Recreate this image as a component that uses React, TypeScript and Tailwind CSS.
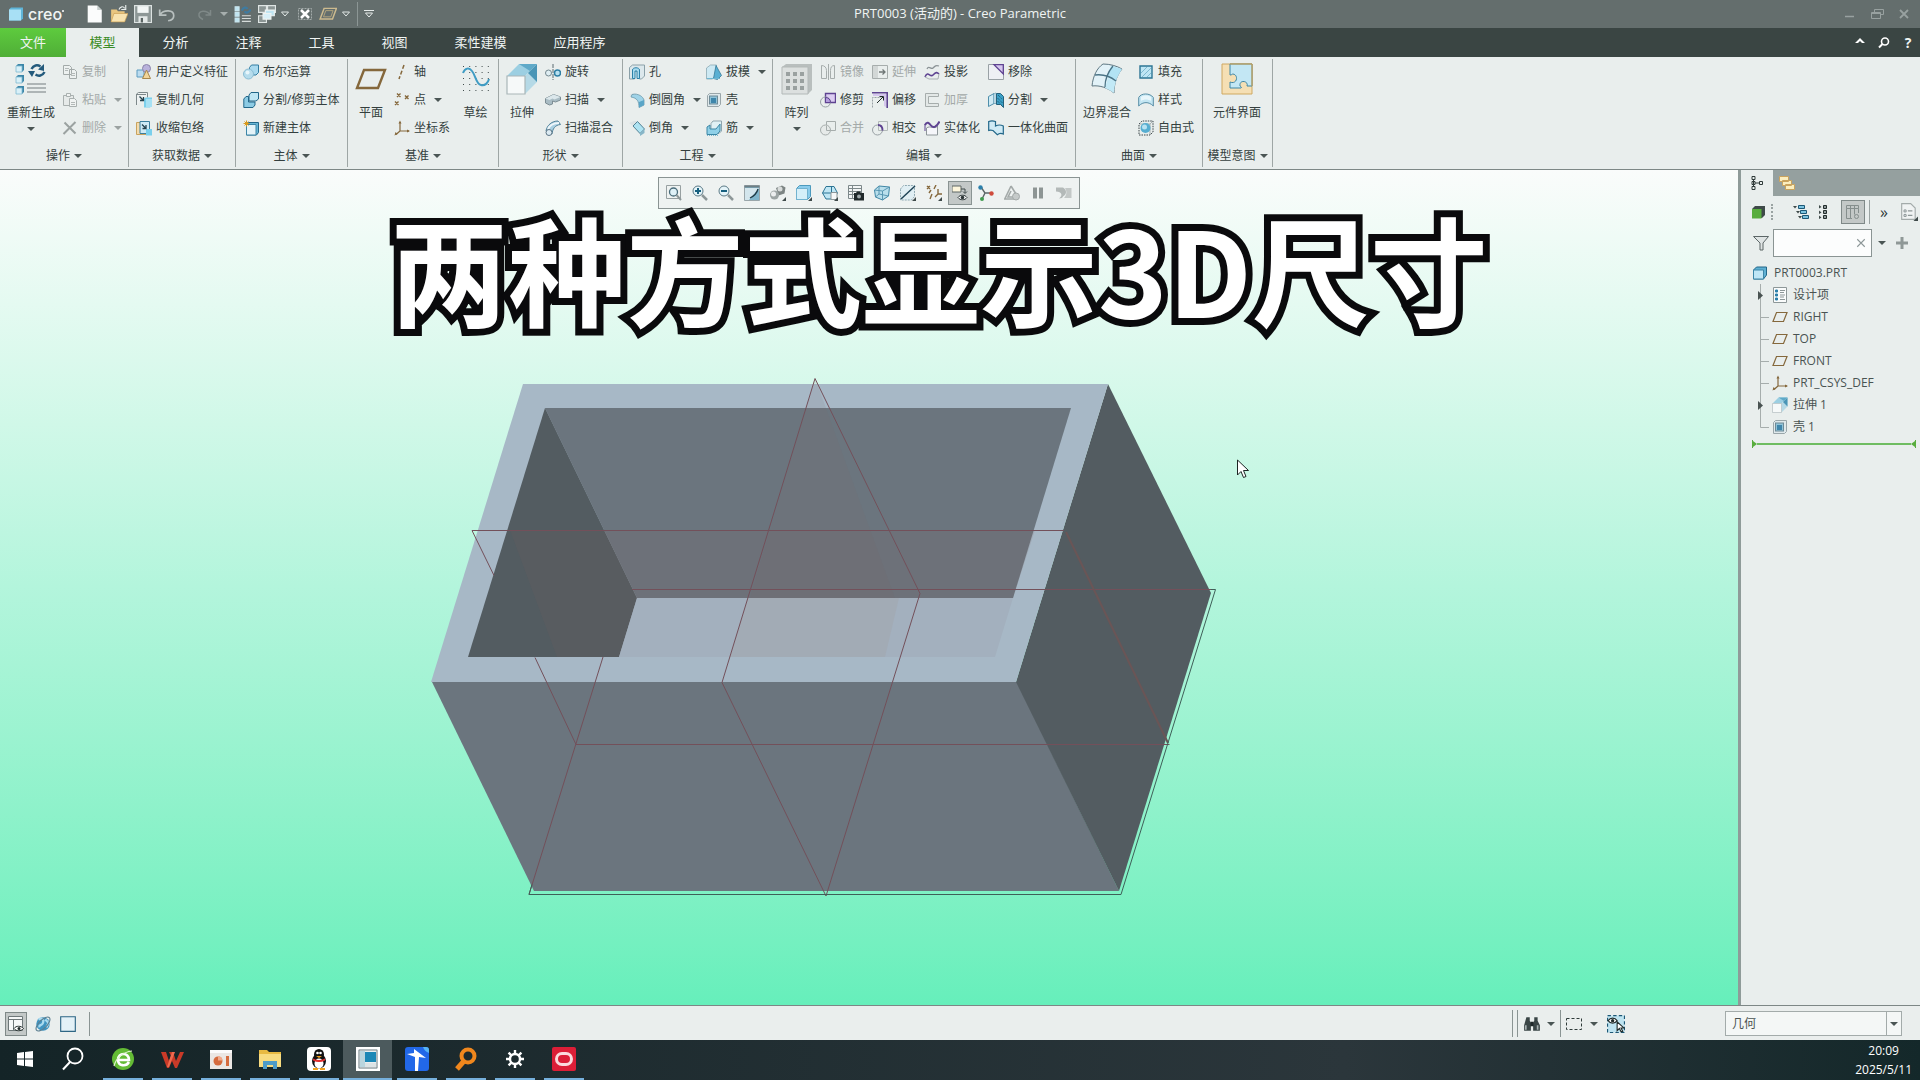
import type { ReactNode } from "react";

const UI_FONT = "font-['Open_Sans','Noto_Sans_CJK_SC',sans-serif]";

/* ---------- shared drawing parts ---------- */

function Ico({
  children,
  className = "size-4",
  box = "0 0 16 16",
}: {
  children: ReactNode;
  className?: string;
  box?: string;
}) {
  return (
    <svg viewBox={box} className={`shrink-0 ${className}`} fill="none" aria-hidden="true">
      {children}
    </svg>
  );
}

function Caret({ className = "text-[#4a5554]" }: { className?: string }) {
  return (
    <svg viewBox="0 0 8 4" className={`h-1 w-2 shrink-0 ${className}`} aria-hidden="true">
      <path d="M0 0h8L4 4z" fill="currentColor" />
    </svg>
  );
}

function CaretOutline() {
  return (
    <svg viewBox="0 0 10 6" className="h-1.5 w-2.5 shrink-0" fill="none" aria-hidden="true">
      <path d="M1.500 1h7L5 5z" stroke="#dfe5e4" />
    </svg>
  );
}

const PlaneIcon = ({ className }: { className?: string }) => (
  <Ico className={className}>
    <path d="M4.500 3.500h10.500l-3.500 9H1z" stroke="#85683c" strokeWidth="1.200" />
  </Ico>
);

const CsysIcon = () => (
  <Ico>
    <path d="M6 2v9h9M6 11l-4 3.500" stroke="#85683c" strokeWidth="1.200" />
    <path d="M4.500 3.500L6 .5l1.500 3zM13 9.500l3 1.500-3 1.500zM.5 15.500l1-3.500 2 2z" fill="#85683c" />
  </Ico>
);

const ShellIcon = () => (
  <Ico>
    <path d="M1.500 3.500l2-2h11v11l-2 2h-11z" fill="#dfe9ec" stroke="#9aa6aa" />
    <rect x="3.500" y="4" width="8" height="8" fill="#8fc3d9" stroke="#6f8a96" />
    <rect x="5" y="6" width="5" height="5" fill="#3f86ab" />
  </Ico>
);

const ExtrudeIcon = ({ className }: { className?: string }) => (
  <Ico className={className}>
    <path d="M.5 6.500L6.500 .5h9L9.500 6.500z" fill="#9ccfe2" />
    <path d="M6.500 .5h9L12 4z" fill="#5ea9c8" />
    <path d="M15.500 .5v9L9.500 15.500v-9z" fill="#b5d9e6" />
    <path d="M15.500 .5v9L11 5z" fill="#4a95b6" />
    <path d="M.5 6.500h9v9h-9z" fill="#f6f9f9" stroke="#aab6b8" strokeWidth=".6" />
  </Ico>
);

/* ---------- ribbon icons ---------- */

const icons = {
  copy: (
    <Ico>
      <path d="M1.500 1.500h6l2 2v7h-8zM7.500 5.500h5l2 2v7h-7z" fill="#edf1f0" stroke="#a3aaa9" />
      <path d="M3 4.500h4M3 6.500h3M9 9.500h4M9 11.500h4" stroke="#b3b9b8" />
    </Ico>
  ),
  paste: (
    <Ico>
      <path d="M1.500 3.500h10v10h-10z" fill="#e6eae9" stroke="#a9b0af" />
      <path d="M4.500 1.500h4v3h-4zM7.500 6.500h5l2 2v6h-7z" fill="#f0f3f2" stroke="#a9b0af" />
      <path d="M9 10.500h4M9 12.500h4" stroke="#b3b9b8" />
    </Ico>
  ),
  remove: (
    <Ico>
      <path d="M2.500 2.500l11 11M13.500 2l-12 12" stroke="#9ba2a1" strokeWidth="2" />
    </Ico>
  ),
  udf: (
    <Ico>
      <path d="M1 6h7v7H1z" fill="#bcdcf0" stroke="#5d9cc0" />
      <circle cx="10.500" cy="4.500" r="4" fill="#b9b2dc" stroke="#8a83ab" />
      <path d="M10.500 6l4 8.500h-8z" fill="#f1d59b" stroke="#a8864b" />
    </Ico>
  ),
  copyGeom: (
    <Ico>
      <path d="M.5 13V2l2-1.500h9v5" fill="#edf1f1" stroke="#7d888a" />
      <path d="M1 2.500h9" stroke="#7d888a" />
      <path d="M8 7l1.500-1.500H16v8L14 15.500H8z" fill="#7bd0ec" />
      <path d="M10 7h6v8h-6z" fill="#a7e1f4" />
      <path d="M3.500 4.500l4 4M7.500 5v3.500H4" stroke="#24424e" strokeWidth="1.300" />
    </Ico>
  ),
  shrink: (
    <Ico>
      <path d="M.5 2.500h10v12H.5z" fill="#f4dcae" stroke="#c9a35e" />
      <path d="M4 1.500h9.500v10l-2 2H4z" fill="#cfeaf5" stroke="#3c7f9d" />
      <path d="M10 9h6v6.500h-6z" fill="#7bd0ec" />
      <path d="M6 4.500l4 4M10 5v3.500H6.500" stroke="#24424e" strokeWidth="1.300" />
    </Ico>
  ),
  boolean: (
    <Ico>
      <path d="M6.500 3.500l2-2.500h7v7.500L13 11H6.500z" fill="#a9d9ee" stroke="#337da1" />
      <circle cx="5.500" cy="10" r="5" fill="#b6dcec" stroke="#8abcd3" />
      <circle cx="4.500" cy="8.500" r="2" fill="#e7f5fa" />
    </Ico>
  ),
  splitBody: (
    <Ico>
      <path d="M6 3l2-2.500h7.500V7L13 9H6z" fill="#bfe6f4" stroke="#226789" />
      <path d="M.8 7L3 4.500h2.500V10H12v3l-2 2.500H.8z" fill="#8ccbe4" stroke="#226789" />
    </Ico>
  ),
  newBody: (
    <Ico>
      <path d="M3.500 4.500l2-2h10v10l-2 2.500h-10z" fill="#69b7d6" stroke="#226789" />
      <path d="M3.500 4.500h9.500V15H3.500z" fill="#e4f3f8" stroke="#3c86a8" />
      <path d="M3.500 .5v6M.5 3.500h6M1.500 1.500l4 4M5.500 1.500l-4 4" stroke="#d99b1f" />
    </Ico>
  ),
  axis: (
    <Ico>
      <path d="M10 1L5 15" stroke="#85683c" strokeWidth="1.500" strokeDasharray="4 2" />
    </Ico>
  ),
  points: (
    <Ico>
      <path
        d="M3 1.500l3.500 3.500M6.500 1.500L3 5M11 3.500l3.500 3.500M14.500 3.500L11 7M1 9.500l3.500 3.500M4.500 9.500L1 13"
        stroke="#85683c"
        strokeWidth="1.400"
      />
    </Ico>
  ),
  csys: <CsysIcon />,
  revolve: (
    <Ico>
      <circle cx="3.500" cy="9" r="3" fill="#dfeef3" stroke="#74888f" />
      <circle cx="12.500" cy="9" r="3" fill="#b8e0f0" stroke="#2f7fa4" strokeWidth="1.500" />
      <path d="M8 0v16" stroke="#5a6b70" strokeDasharray="4 1" />
    </Ico>
  ),
  sweep: (
    <Ico>
      <path d="M.5 6.500l8-4 7 2.500v3l-5 2-3-1v3l-3 1-4-2z" fill="#a9bcc4" stroke="#7d8d94" />
      <path d="M.5 6.500l8-4 7 2.500-6 2.500-2-1-3 1.500z" fill="#dbe7eb" />
    </Ico>
  ),
  sweptBlend: (
    <Ico>
      <path d="M1 11C2 5 7 1 13 1l2.500 3.500C10 5 7.500 9 7 14z" fill="#a8cfe2" stroke="#52829a" />
      <path d="M3 9C5 5 9 3 14 3" stroke="#eef6fa" strokeWidth="2" />
      <circle cx="4" cy="12.500" r="3" fill="#dcebf3" stroke="#5c7484" />
    </Ico>
  ),
  hole: (
    <Ico>
      <path d="M.5 3.500l3-2.500h12v11l-3 3h-2V7H5.500v8h-5z" fill="#dce8ec" stroke="#8aa0a8" />
      <path d="M3.500 14.500V6c0-3 7-3 7 0v8.500h-2.500V7H6v7.500z" fill="#a7dbef" stroke="#2c81a8" />
    </Ico>
  ),
  round: (
    <Ico>
      <path d="M0 3l5-2 3 0-4 4z" fill="#dde3e5" />
      <path d="M3 2.500C10 1 14 5 15 8v5l-5 2.500C10 9 8 6 2 5z" fill="#9fd3e8" stroke="#6a98ab" strokeWidth=".8" />
      <path d="M15 8v5l-5 2.500V10z" fill="#5aa5c7" />
    </Ico>
  ),
  chamfer: (
    <Ico>
      <path d="M0 3l5-2 4 0-5 5z" fill="#dde3e5" />
      <path d="M4 6l4.500-4.500L15.500 9 11 13.500z" fill="#aee3f2" stroke="#528296" />
      <path d="M11 13.500L15.500 9v4L11 16z" fill="#87b6c8" />
    </Ico>
  ),
  draft: (
    <Ico>
      <path d="M.5 4l4-3h6v9l-4 5h-6z" fill="#cde9f3" stroke="#8ca9b4" strokeWidth=".8" />
      <path d="M10 1.500l5.500 10-4 4-4-1z" fill="#59b0d3" stroke="#357a98" strokeWidth=".8" />
      <path d="M1 14.500h13" stroke="#6fb6d1" />
    </Ico>
  ),
  shell: <ShellIcon />,
  rib: (
    <Ico>
      <path d="M5 3.500l2-2.500h8.500v10L13 13.500H5z" fill="#e0f0f4" stroke="#8fa5ad" />
      <path d="M1 7l3-2v4h6l4-5v7l-3 3.500H1z" fill="#8fd0e8" stroke="#3c86a4" />
      <path d="M1 15.500h12" stroke="#7ab7cf" strokeDasharray="1 1" />
    </Ico>
  ),
  mirror: (
    <Ico>
      <path d="M1.500 1.500c3 0 5 2 5 5v8h-5zM14.500 1.500c-3 0-4 2-4 5v8h4zM8.500 0v16" stroke="#a6adac" />
    </Ico>
  ),
  trim: (
    <Ico>
      <path d="M5.500 1.500h10v9h-10z" fill="#dccdf2" stroke="#5e4391" strokeWidth="1.400" />
      <circle cx="5.500" cy="10" r="5" stroke="#99a1a5" />
      <path d="M5.500 5.500v5h5c0-3-2-5-5-5z" fill="#b49ddd" stroke="#5e4391" />
    </Ico>
  ),
  merge: (
    <Ico>
      <path d="M6.500 1.500h9v9h-9z" stroke="#a6adac" />
      <circle cx="5.500" cy="10" r="5" fill="#e6eae9" stroke="#a6adac" />
      <path d="M6.500 6v4.500h4" stroke="#a6adac" />
    </Ico>
  ),
  extend: (
    <Ico>
      <path d="M.5 1.500h15v13H.5z" stroke="#a6adac" />
      <path d="M1 2h5v12H1z" fill="#d2d7d6" />
      <path d="M7 8h6M10.500 5.500L13 8l-2.500 2.500" stroke="#6f7776" strokeWidth="1.300" />
    </Ico>
  ),
  offset: (
    <Ico>
      <path d="M0 .8h15.200V16" stroke="#5e4391" strokeWidth="1.600" />
      <path d="M1 2h13v13l-2-1V4H1z" fill="#d5c6ee" />
      <path d="M.5 15.500v-10h9" stroke="#99a1a5" strokeDasharray="2 1" />
      <path d="M5 11l6-6M7.500 4.500H11.500V8.500" stroke="#222c2b" />
    </Ico>
  ),
  intersect: (
    <Ico>
      <path d="M6.500 1.500h9v9h-9z" stroke="#b3bab9" />
      <circle cx="5.500" cy="10" r="5" stroke="#99a1a5" />
      <path d="M6 5c3 0 4.500 2 4.500 5.500" stroke="#5e4391" strokeWidth="1.800" />
    </Ico>
  ),
  project: (
    <Ico>
      <path d="M3 5c2-4 4 1 6-1s3-3 6-2" stroke="#8b9396" strokeWidth="1.300" />
      <path d="M1 13c3-7 5 1 8-2s4-3 6-1" stroke="#5e4391" strokeWidth="1.600" />
      <path d="M1 13l4 2h9l1-5" stroke="#aab1b3" />
    </Ico>
  ),
  thicken: (
    <Ico>
      <path d="M14.500 1.500h-13v13h13v-3h-10v-7h10z" fill="#e3e8e7" stroke="#a6adac" />
    </Ico>
  ),
  solidify: (
    <Ico>
      <path d="M2.500 8v7h11V6c-3 4-7-1-11 2z" fill="#f5f6fa" stroke="#8e969a" />
      <path d="M1 5C3 1 5 3 7 5.500S12 8 15.500 1.500" stroke="#5e4391" strokeWidth="2" />
      <path d="M1 4v7" stroke="#5e4391" />
    </Ico>
  ),
  removeSurf: (
    <Ico>
      <path d="M.5 .5h15v15H.5z" fill="#eef0f4" stroke="#99a1a5" />
      <path d="M6 .7h9.300V10z" fill="#d5c6ee" stroke="#5e4391" strokeWidth="1.300" />
    </Ico>
  ),
  splitSurf: (
    <Ico>
      <path d="M.5 4.500L6 1.500v10L.5 14.500z" fill="#cfeaf4" stroke="#4f8fab" />
      <path d="M6 2c1-1 2-1 2-1v10.500H6z" fill="#e7f4f8" stroke="#4f8fab" strokeWidth=".6" />
      <path d="M8.500 1.500h4l3 3v11l-3-3h-4z" fill="#3ba0c6" stroke="#24617c" />
      <path d="M10 3l4 4M9.500 6l5 5M9.500 9l4 4" stroke="#17506c" strokeDasharray="1 1" />
    </Ico>
  ),
  unify: (
    <Ico>
      <path
        d="M.7 1.500C3 .5 5 .5 7.500 1.500V6c3-1.500 5-1.500 7.800 0v8c-2-1-4-1-6 .7L5 10.500C3 10 2 10 .7 10.500z"
        fill="#cfeaf5"
        stroke="#226789"
        strokeWidth="1.200"
      />
    </Ico>
  ),
  fill: (
    <Ico>
      <path d="M2 2h12v12H2z" fill="#bfe6f4" stroke="#2d7594" strokeWidth="1.400" />
      <path d="M3 9l6-6M4 13l9-9M9 13l4-4" stroke="#7fb9d0" />
    </Ico>
  ),
  style: (
    <Ico>
      <path d="M.7 5.500C3 .8 12 .8 15.300 5.500V14C11 9.500 5 9.500 .7 14z" fill="#c3e6f3" stroke="#578da5" />
      <path d="M3 5c3-2 7-2 10 0v4C10 7 6 7 3 9z" fill="#e8f6fb" />
    </Ico>
  ),
  freestyle: (
    <Ico>
      <path d="M1 4l3-3h11v11l-3 3H1z" stroke="#3c474a" strokeDasharray="1.500 1" />
      <path d="M1 4h11v11M12 4l3-3" stroke="#7d888a" strokeWidth=".6" />
      <circle cx="7.500" cy="8" r="5" fill="#57aed1" />
      <circle cx="6.500" cy="7" r="2.500" fill="#b9e2f1" />
    </Ico>
  ),
};

/* ---------- ribbon ---------- */

type Item = { icon: ReactNode; label: string; caret?: boolean; off?: boolean };

function SmallItem({ icon, label, caret, off }: Item) {
  return (
    <button
      type="button"
      disabled={off}
      className={`flex h-7 items-center gap-1 whitespace-nowrap ${off ? "text-[#a3a9a8]" : "text-[#343f3e]"}`}
    >
      {icon}
      <span>{label}</span>
      {caret && (
        <span className="pl-1">
          <Caret className={off ? "text-[#9ba2a1]" : "text-[#4a5554]"} />
        </span>
      )}
    </button>
  );
}

function Column({ items, className = "" }: { items: Item[]; className?: string }) {
  return (
    <div className={`flex flex-col items-start ${className}`}>
      {items.map((item) => (
        <SmallItem key={item.label} {...item} />
      ))}
    </div>
  );
}

function BigItem({
  icon,
  label,
  caret,
  className = "",
}: {
  icon: ReactNode;
  label: string;
  caret?: boolean;
  className?: string;
}) {
  return (
    <button type="button" className={`flex flex-col items-center pt-[5px] ${className}`}>
      <span className="flex h-10 items-start justify-center">{icon}</span>
      <span className="h-5 leading-5 whitespace-nowrap">{label}</span>
      {caret && (
        <span className="pt-1">
          <Caret />
        </span>
      )}
    </button>
  );
}

function Group({ title, width, children }: { title: string; width: string; children: ReactNode }) {
  return (
    <section className={`flex shrink-0 ${width}`}>
      <div className="flex min-w-0 flex-1 flex-col">
        <div className="flex h-[84px] justify-start">{children}</div>
        <button type="button" className="flex h-[27px] items-center justify-center gap-1 pt-px whitespace-nowrap">
          {title}
          <Caret />
        </button>
      </div>
      <div className="mt-px mb-0.5 w-px bg-[#9ea6a5]" />
    </section>
  );
}

function Ribbon() {
  return (
    <div className="flex shrink-0 overflow-hidden border-b border-[#7d8786] bg-[#e9eeed] pt-px text-xs text-[#343f3e]">
      <Group title="操作" width="w-[129px]">
        <BigItem
          className="w-[62px]"
          label="重新生成"
          caret
          icon={
            <Ico className="h-8 w-8" box="0 0 32 32">
              {[1, 12, 23].map((y) => (
                <g key={y}>
                  <path d={`M1 ${y + 2}l2-2h6v6l-2 2H1z`} fill="#3c86a8" />
                  <path d={`M1 ${y + 2}h6v6H1z`} fill="#d9f0f8" stroke="#7fb9d0" strokeWidth=".8" />
                </g>
              ))}
              <path d="M16.500 6c2-4 6-4.500 9-2.500M29.500 9c-2 4-6 4.500-9 2.500" stroke="#245a7c" strokeWidth="2.500" />
              <path d="M23 6.500L29 1v7zM13 8h7l-3 6z" fill="#245a7c" />
              <path d="M12 21h19M12 25h19M12 29h19" stroke="#9aa3a4" strokeWidth="1.600" />
            </Ico>
          }
        />
        <Column
          items={[
            { icon: icons.copy, label: "复制", off: true },
            { icon: icons.paste, label: "粘贴", caret: true, off: true },
            { icon: icons.remove, label: "删除", caret: true, off: true },
          ]}
        />
      </Group>
      <Group title="获取数据" width="w-[107px]">
        <Column
          className="pl-[7px]"
          items={[
            { icon: icons.udf, label: "用户定义特征" },
            { icon: icons.copyGeom, label: "复制几何" },
            { icon: icons.shrink, label: "收缩包络" },
          ]}
        />
      </Group>
      <Group title="主体" width="w-[112px]">
        <Column
          className="pl-[7px]"
          items={[
            { icon: icons.boolean, label: "布尔运算" },
            { icon: icons.splitBody, label: "分割/修剪主体" },
            { icon: icons.newBody, label: "新建主体" },
          ]}
        />
      </Group>
      <Group title="基准" width="w-[151px]">
        <BigItem className="w-[46px]" label="平面" icon={<PlaneIcon className="size-8" />} />
        <Column
          items={[
            { icon: icons.axis, label: "轴" },
            { icon: icons.points, label: "点", caret: true },
            { icon: icons.csys, label: "坐标系" },
          ]}
        />
        <BigItem
          className="w-11 pl-[7px]"
          label="草绘"
          icon={
            <Ico className="h-8 w-8" box="0 0 32 32">
              {[3, 9, 15, 21, 27].map((y) => (
                <path key={y} d={`M3 ${y + 0.5}h27`} stroke="#3f4a4a" strokeDasharray="1 5.200" />
              ))}
              <path d="M3 10c2-5 6-6 9-2 4 5 4 13 9 14 4 1 7-2 8-6" stroke="#3f9cc4" strokeWidth="2" />
            </Ico>
          }
        />
      </Group>
      <Group title="形状" width="w-[124px]">
        <BigItem className="w-[46px]" label="拉伸" icon={<ExtrudeIcon className="size-8" />} />
        <Column
          items={[
            { icon: icons.revolve, label: "旋转" },
            { icon: icons.sweep, label: "扫描", caret: true },
            { icon: icons.sweptBlend, label: "扫描混合" },
          ]}
        />
      </Group>
      <Group title="工程" width="w-[150px]">
        <Column
          className="w-[83px] pl-1.5"
          items={[
            { icon: icons.hole, label: "孔" },
            { icon: icons.round, label: "倒圆角", caret: true },
            { icon: icons.chamfer, label: "倒角", caret: true },
          ]}
        />
        <Column
          items={[
            { icon: icons.draft, label: "拔模", caret: true },
            { icon: icons.shell, label: "壳" },
            { icon: icons.rib, label: "筋", caret: true },
          ]}
        />
      </Group>
      <Group title="编辑" width="w-[303px]">
        <BigItem
          className="w-[47px]"
          label="阵列"
          caret
          icon={
            <Ico className="h-8 w-8" box="0 0 32 32">
              <path d="M1 4l4-3h26v26l-4 4H1z" fill="#b9bfbe" />
              <path d="M1 4h26v27H1z" fill="#dce0df" stroke="#b3b9b8" />
              {[11, 18, 25].map((y) => (
                <path key={y} d={`M5 ${y}h4M12 ${y}h4M19 ${y}h4`} stroke="#9aa1a0" strokeWidth="4" />
              ))}
            </Ico>
          }
        />
        <Column
          className="w-[52px]"
          items={[
            { icon: icons.mirror, label: "镜像", off: true },
            { icon: icons.trim, label: "修剪" },
            { icon: icons.merge, label: "合并", off: true },
          ]}
        />
        <Column
          className="w-[52px]"
          items={[
            { icon: icons.extend, label: "延伸", off: true },
            { icon: icons.offset, label: "偏移" },
            { icon: icons.intersect, label: "相交" },
          ]}
        />
        <Column
          className="w-16"
          items={[
            { icon: icons.project, label: "投影" },
            { icon: icons.thicken, label: "加厚", off: true },
            { icon: icons.solidify, label: "实体化" },
          ]}
        />
        <Column
          items={[
            { icon: icons.removeSurf, label: "移除" },
            { icon: icons.splitSurf, label: "分割", caret: true },
            { icon: icons.unify, label: "一体化曲面" },
          ]}
        />
      </Group>
      <Group title="曲面" width="w-[127px]">
        <BigItem
          className="w-[62px]"
          label="边界混合"
          icon={
            <Ico className="h-8 w-8" box="0 0 32 32">
              <path d="M1 23C2 13 6 5 12 1c7 0 14 2 19 5-5 6-8 14-8 24C17 25 9 22 1 23z" fill="#e2f2f8" stroke="#5f7883" />
              <path d="M20 3c6 1 8 2 11 3-3 5-5 8-6 12l-9-4z" fill="#b2e3f4" />
              <path d="M14 25c3 1 6 3 9 5 0-5 1-8 2-12l-8-3z" fill="#c2e9f6" />
              <path d="M4 12c8-1 16 2 21 6M22 3c-5 6-8 13-8 21" stroke="#4b7486" strokeWidth="1.300" />
            </Ico>
          }
        />
        <Column
          items={[
            { icon: icons.fill, label: "填充" },
            { icon: icons.style, label: "样式" },
            { icon: icons.freestyle, label: "自由式" },
          ]}
        />
      </Group>
      <Group title="模型意图" width="w-[70px]">
        <BigItem
          className="w-[68px]"
          label="元件界面"
          icon={
            <Ico className="h-8 w-8" box="0 0 32 32">
              <path d="M1 1h30v30H1z" fill="#f5dfb4" stroke="#cfa861" />
              <path
                d="M9 1h22v22h-5c2-5-8-7-7 0 1 1 2 1 1 2H9v-6c7 3 9-7 3-8-1 0-1 1-3 1z"
                fill="#c3e7f4"
                stroke="#3f86a5"
              />
              <path d="M9 1h22v22" stroke="#d8a24a" />
            </Ico>
          }
        />
      </Group>
    </div>
  );
}

/* ---------- title bar and tabs ---------- */

function TitleBar() {
  return (
    <header className="grid h-7 shrink-0 grid-cols-[1fr_auto_1fr] items-center bg-[#646e6d] text-[13px] text-[#f0f4f3]">
      <div className="flex h-full items-center">
        <div className="flex w-[86px] items-center gap-1 pl-2">
          <Ico>
            <path d="M1 3.500l2-2h12v11l-2 2H1z" fill="#5fb4d8" />
            <path d="M1 3.500h12v11H1z" fill="#a8e0f5" />
          </Ico>
          <span className="font-['Inter',sans-serif] text-base leading-4 font-medium">creo</span>
          <span className="-ml-1 mb-1.5 size-0.5 rounded-full bg-white" />
        </div>
        <div className="flex items-center gap-1.5">
          <button type="button" aria-label="新建">
            <Ico className="size-[18px]">
              <path d="M1.500 .5h8.500l4 4v11H1.500z" fill="#fbfcfc" />
              <path d="M10 .5v4h4z" fill="#c5cccb" />
            </Ico>
          </button>
          <button type="button" aria-label="打开">
            <Ico className="size-[18px]">
              <path d="M1 4h5l1 1.500h6V15H1z" fill="#e9c680" />
              <path d="M3.500 7.500H16L13 15H1z" fill="#f8e3b0" stroke="#c89d50" strokeWidth=".6" />
              <path d="M8 4c1-3 4-3 5-1M14 0v4h-4" stroke="#e9eeed" />
            </Ico>
          </button>
          <button type="button" aria-label="保存">
            <Ico className="size-[18px]">
              <path d="M.5 .5h15v15H.5z" fill="#8d9796" stroke="#dce2e1" />
              <path d="M3 1h10v6H3z" fill="#f2f6f5" />
              <path d="M4 10h8v5.500H4z" fill="#e3e8e7" />
              <path d="M6 11.500h2v4H6z" fill="#5a6463" />
            </Ico>
          </button>
          <button type="button" aria-label="撤消">
            <Ico className="size-[18px]">
              <path d="M1.500 4v5h6M2 8.500C5 4 14 4 14 9.500c0 3-2 4-5 4.500" stroke="#b8c0bf" strokeWidth="1.500" />
            </Ico>
          </button>
        </div>
        <div className="flex items-center pl-5">
          <button type="button" aria-label="重做" className="flex items-center gap-2" disabled>
            <Ico>
              <path d="M14.500 4v5h-5M14 8.500C11 4 2 4 3 9.500c0 2 2 3 4 4" stroke="#7f8988" strokeWidth="1.500" />
            </Ico>
            <Caret className="text-[#a6aead]" />
          </button>
        </div>
        <div className="flex items-center gap-1.5 pl-1.5">
          <button type="button" aria-label="重新生成模型">
            <Ico className="size-[18px]">
              <path d="M1 1.500h3.500v3.500H1zM1 6.500h3.500V10H1zM1 11.500h3.500V15H1z" fill="#bfe4f1" stroke="#c9e5ee" />
              <path d="M7 5c1-3 4-3.500 5-1.500M14.500 4c-1 3-4 3.500-5 1.500" stroke="#3f7ba0" strokeWidth="2" />
              <path d="M7 9.500h8M7 12h8M7 14.500h8" stroke="#d6dcdb" />
            </Ico>
          </button>
          <button type="button" aria-label="窗口" className="flex items-center gap-1">
            <Ico className="size-[18px]">
              <path d="M.5 .5h7v6h-7zM8.500 .5h7v6h-7zM.5 9.500h7v6h-7z" fill="#8b9594" stroke="#dfe5e4" />
              <path d="M6.500 4.500h8v5h-8z" fill="#bfe4f1" stroke="#eef3f2" />
              <path d="M4.500 7.500h7v5h-7z" fill="#d8f0f8" stroke="#eef3f2" />
            </Ico>
            <CaretOutline />
          </button>
        </div>
        <div className="flex items-center gap-1.5 pl-[7px]">
          <button type="button" aria-label="关闭">
            <Ico>
              <path d="M1.500 2.500h13v11h-13z" stroke="#a3abaa" strokeDasharray="2 1" />
              <path d="M4 4l8 8M12 4l-8 8" stroke="#fff" strokeWidth="2.500" />
            </Ico>
          </button>
          <button type="button" aria-label="平面显示" className="flex items-center gap-1">
            <Ico className="size-[18px]">
              <path d="M4.500 3h11l-3.500 9.500H1z" stroke="#cdbb8f" strokeWidth="1.300" />
              <path d="M6 5h6.500l-2 5.500H4z" stroke="#b8a87f" strokeWidth=".8" />
            </Ico>
            <CaretOutline />
          </button>
          <span className="h-6 w-px bg-[#8c9695]" />
          <button type="button" aria-label="自定义快速访问工具栏">
            <svg viewBox="0 0 10 8" className="h-2 w-2.5" fill="none">
              <path d="M0 .5h10" stroke="#e6ebea" />
              <path d="M1.500 3h7L5 7z" stroke="#e6ebea" />
            </svg>
          </button>
        </div>
      </div>
      <h1 className="whitespace-nowrap">PRT0003 (活动的) - Creo Parametric</h1>
      <div className="flex items-center justify-end gap-[11px] pr-2 text-[#98a1a0]">
        <button type="button" aria-label="最小化">
          <Ico>
            <path d="M3 10.500h9" stroke="currentColor" strokeWidth="1.500" />
          </Ico>
        </button>
        <button type="button" aria-label="还原">
          <Ico>
            <path d="M5.500 6V3.500h9v5H12M2.500 6.500h9v6h-9zM2.500 7.500h9" stroke="currentColor" />
          </Ico>
        </button>
        <button type="button" aria-label="关闭窗口">
          <Ico>
            <path d="M4 4l8 8M12 4l-8 8" stroke="currentColor" strokeWidth="1.800" />
          </Ico>
        </button>
      </div>
    </header>
  );
}

const TABS = [
  { label: "分析", width: "w-[73px]" },
  { label: "注释", width: "w-[73px]" },
  { label: "工具", width: "w-[73px]" },
  { label: "视图", width: "w-[73px]" },
  { label: "柔性建模", width: "w-[99px]" },
  { label: "应用程序", width: "w-[99px]" },
];

function TabBar() {
  return (
    <nav className="flex h-[29px] shrink-0 bg-[#3a4543] text-[13px] text-[#f0f4f3]">
      <button type="button" className="w-[66px] bg-linear-to-b from-[#5ecb3e] to-[#4fae37]">
        文件
      </button>
      <button type="button" className="w-[73px] bg-[#e9eeed] text-[#3b8c26]">
        模型
      </button>
      {TABS.map((tab) => (
        <button key={tab.label} type="button" className={tab.width}>
          {tab.label}
        </button>
      ))}
      <div className="ml-auto flex items-center gap-2 pr-1">
        <button type="button" aria-label="最小化功能区">
          <Ico>
            <path d="M3 8l5-5 5 5h-3L8 6 6 8z" fill="#fff" />
          </Ico>
        </button>
        <button type="button" aria-label="搜索">
          <Ico>
            <circle cx="9" cy="6.500" r="3.500" stroke="#fff" strokeWidth="1.600" />
            <path d="M6.500 9L3 12.500" stroke="#fff" strokeWidth="2" />
          </Ico>
        </button>
        <button type="button" className="w-4 text-sm font-bold">
          ?
        </button>
      </div>
    </nav>
  );
}

/* ---------- graphics area ---------- */

const Corner = () => <path d="M16 12v4h-4z" fill="#3f4a4a" />;

const VIEW_TOOLS: { name: string; art: ReactNode; on?: boolean }[] = [
  {
    name: "重新调整",
    art: (
      <>
        <path d="M.5 .5h14v13H.5z" stroke="#97a0a1" />
        <circle cx="7.500" cy="7" r="4" fill="#dff1f7" stroke="#4a6c7a" strokeWidth="1.300" />
        <path d="M10.500 10l4.500 5" stroke="#8d9798" strokeWidth="2" />
      </>
    ),
  },
  {
    name: "放大",
    art: (
      <>
        <circle cx="6" cy="6" r="5" fill="#e4f4f9" stroke="#5c7a86" />
        <path d="M3 6h6M6 3v6" stroke="#17607f" strokeWidth="2" />
        <path d="M10 10l5 5" stroke="#8d9798" strokeWidth="2.500" />
      </>
    ),
  },
  {
    name: "缩小",
    art: (
      <>
        <circle cx="6" cy="6" r="5" fill="#e4f4f9" stroke="#5c7a86" />
        <path d="M3 6h6" stroke="#17607f" strokeWidth="2" />
        <path d="M10 10l5 5" stroke="#8d9798" strokeWidth="2.500" />
      </>
    ),
  },
  {
    name: "重画",
    art: (
      <>
        <path d="M.5 .5h15v15H.5z" fill="#7fb5cb" stroke="#9aa6aa" />
        <path d="M1 3h14L5 15H1z" fill="#d3e6ed" />
        <path d="M14 4c-1 4-4 7-8 9" stroke="#1f3b46" strokeWidth="1.300" />
        <path d="M.5 1.500h15" stroke="#6e7f85" strokeWidth="2" />
      </>
    ),
  },
  {
    name: "着色",
    art: (
      <>
        <path d="M6 3l6-2.500 3.500 2-1 6-6 2z" fill="#7d8584" />
        <circle cx="10" cy="4" r="2.500" fill="#d8dcdb" />
        <circle cx="4.500" cy="10" r="4.500" fill="#9da5a4" />
        <circle cx="3.500" cy="9" r="2.500" fill="#eceeee" />
        <Corner />
      </>
    ),
  },
  {
    name: "显示样式",
    art: (
      <>
        <path d="M.5 3.500l3-3h11v11l-3 3H.5z" fill="#8accec" stroke="#4c9abd" />
        <path d="M.5 3.500h11v11H.5z" fill="#d5eff9" stroke="#71b2cf" />
        <Corner />
      </>
    ),
  },
  {
    name: "已保存方向",
    art: (
      <>
        <path d="M.5 8L4 1.500h8L15.500 8 12 14H4z" fill="#bfe6f4" stroke="#2d7594" />
        <path d="M.5 8h9V1.500M9.500 8L12 14" stroke="#2d7594" />
        <path d="M9 7.500h6v7H9z" fill="#f6f8f8" stroke="#8d9798" />
        <Corner />
      </>
    ),
  },
  {
    name: "视图管理器",
    art: (
      <>
        <path d="M.5 .5h13v13H.5zM.5 3.500h13M.5 6.500h13M.5 9.500h13M4.500 .5v13" fill="#f2f5f5" stroke="#7d888a" />
        <path d="M6 8h2l1-1.500h3L13 8h3v7.500H6z" fill="#20292b" />
        <circle cx="11" cy="11.500" r="2" fill="#9fa9ab" />
      </>
    ),
  },
  {
    name: "透视图",
    art: (
      <>
        <path d="M.5 5L5 1l10.500 1-1 9-6 4-7-3z" fill="#b9dfec" stroke="#3f86a5" />
        <path d="M.5 5l8 1 7-4M8.500 6v9M5 1v8l9.500 2M5 9l-3.500 3" stroke="#5a98b3" />
      </>
    ),
  },
  {
    name: "截面",
    art: (
      <>
        <path d="M.5 4l3-3.500h11v11l-3 3.500H.5z" fill="#e0eff4" stroke="#8fa9b3" strokeDasharray="2 1" />
        <path d="M1 14L15 1" stroke="#1e4356" strokeWidth="1.500" />
        <Corner />
      </>
    ),
  },
  {
    name: "基准显示",
    art: (
      <>
        <path d="M1 1l3 3M4 1L1 4M10 0L8 4M6 9l-2 5M12 4v5h4M12 9l-3 3M3 8l2-3" stroke="#85683c" strokeWidth="1.400" />
        <Corner />
      </>
    ),
  },
  {
    name: "注释显示",
    on: true,
    art: (
      <>
        <path d="M0 1h9v6H0z" fill="#fdf6dc" stroke="#5c6667" />
        <path d="M9 4h4v4M11 6.500l2 2 2-2" stroke="#3f4a4a" />
        <path d="M6 12.500c2-3 7-3 9 0-2 3-7 3-9 0z" fill="#fff" stroke="#2b3536" />
        <circle cx="10.500" cy="12.500" r="1.800" fill="#2b3536" />
      </>
    ),
  },
  {
    name: "旋转中心",
    art: (
      <>
        <path d="M3 2l4 6-3 6M7 8h6" stroke="#5c6667" strokeWidth="1.400" />
        <circle cx="2.500" cy="2.500" r="2.200" fill="#2c80ab" />
        <circle cx="13.500" cy="8.500" r="2.200" fill="#cf4b3c" />
        <circle cx="4" cy="14" r="2" fill="#3f9b4e" />
      </>
    ),
  },
  {
    name: "仿真",
    art: (
      <>
        <path d="M7 1L.8 14h11M7 1l5 8M7 6l-3 6h5" stroke="#a3a9a8" strokeWidth="1.600" />
        <circle cx="12" cy="11.500" r="3.500" fill="#c5cac9" stroke="#a3a9a8" />
      </>
    ),
  },
  {
    name: "暂停",
    art: <path d="M3 2.500h4v11H3zM9 2.500h4v11H9z" fill="#8d9594" />,
  },
  {
    name: "重播",
    art: (
      <>
        <path d="M0 2.500h7c4 2 4 7 0 9 0 1-2 2-4 2 4-3 3-7-3-7z" fill="#b3b9b8" />
        <path d="M9 3h6.500v10H8c3-3 3-7 1-10z" fill="#c3c8c7" />
      </>
    ),
  },
];

function ViewToolbar() {
  return (
    <div className="flex h-8 border border-[#8a9493] bg-[#eef2f1] px-0.5">
      {VIEW_TOOLS.map((tool) => (
        <button
          key={tool.name}
          type="button"
          aria-label={tool.name}
          className="flex w-[26px] items-center justify-center"
        >
          <span
            className={`flex size-6 items-center justify-center border ${
              tool.on ? "border-[#8a9493] bg-[#c3c8c7]" : "border-transparent"
            }`}
          >
            <Ico>{tool.art}</Ico>
          </span>
        </button>
      ))}
    </div>
  );
}

function Model() {
  return (
    <svg viewBox="0 170 1738 835" className="absolute inset-0 h-full w-full" fill="none" aria-hidden="true">
      {/* solid faces */}
      <path d="M432 682h585l102 209H534z" fill="#6b757e" />
      <path d="M1108 384l103 209-92 298-103-209z" fill="#535c61" />
      <path d="M523 384h585l-92 298H431z" fill="#a7b8c6" />
      <path d="M545 408h526l-58 190H637z" fill="#6b757e" />
      <path d="M545 408l92 190-18 59H468z" fill="#535c61" />
      <path d="M637 598h376l-18 59H619z" fill="#a3b0be" />

      {/* datum planes showing through the cavity */}
      <path d="M815 378l80 220H750z" fill="#7a6a6c" fillOpacity=".12" />
      <path d="M510 530h525l-22 68H637l-18 59h-62z" fill="#78605f" fillOpacity=".15" />
      <path d="M748 598h151l-14 59H730z" fill="#a29fa2" fillOpacity=".3" />

      {/* datum plane outlines */}
      <g stroke="#73505a" strokeWidth="1">
        <path d="M815 378.500l105 215-94 302.500-104-213.500z" />
        <path d="M494 575.500l-22-45h592M535 657.500l41 87h593.500" />
        <path d="M603 657L529 894.500" />
        <path d="M632 589.500h579" />
      </g>
      <path d="M1066 532l102 211" stroke="#6a5556" strokeWidth="2" />
      <path d="M1211 589.500h4.500l-94.500 305H529l3-10" stroke="#3f5f58" />
    </svg>
  );
}

function Graphics() {
  return (
    <main className="relative flex min-w-0 flex-1 flex-col items-center overflow-hidden bg-linear-to-b from-[#fafcfb] via-[#b3f5dc] to-[#66efbb] pt-[7px]">
      <Model />
      <div className="relative">
        <ViewToolbar />
      </div>
      <h2 className="relative pl-[140px] font-['Noto_Sans_CJK_SC',sans-serif] text-[118px] leading-[116px] font-bold whitespace-nowrap text-white [-webkit-text-stroke:14px_#0a0a0c] [paint-order:stroke_fill]">
        两种方式显示3D尺寸
      </h2>
      <svg
        viewBox="0 0 12 20"
        className="absolute top-[289px] left-[71.2%] h-5 w-3"
        fill="#fff"
        stroke="#1c2423"
        aria-hidden="true"
      >
        <path d="M.5 1v15l3.500-3.500 2.500 6 2.500-1-2.500-6h5z" />
      </svg>
    </main>
  );
}

/* ---------- model tree ---------- */

type Node = { label: string; icon: ReactNode; open?: boolean };

const TREE: Node[] = [
  {
    label: "设计项",
    open: true,
    icon: (
      <Ico>
        <path d="M1.500 .5h13v15h-13z" fill="#fafcfc" stroke="#8d9798" />
        <path d="M3.500 3h2v2h-2zM3.500 7h2v2h-2zM3.500 11h2v2h-2z" fill="#2c80ab" stroke="#2c80ab" />
        <path d="M8 3.500h5M8 5.500h4M8 8h5M8 10h4M8 12.500h5" stroke="#8d9798" />
      </Ico>
    ),
  },
  { label: "RIGHT", icon: <PlaneIcon /> },
  { label: "TOP", icon: <PlaneIcon /> },
  { label: "FRONT", icon: <PlaneIcon /> },
  { label: "PRT_CSYS_DEF", icon: <CsysIcon /> },
  { label: "拉伸 1", open: true, icon: <ExtrudeIcon /> },
  { label: "壳 1", icon: <ShellIcon /> },
];

function TreePanel() {
  return (
    <aside className="flex w-[182px] shrink-0 flex-col border-l-[3px] border-[#8f9b99] bg-[#e9eeed] text-xs text-[#4a5352]">
      <div className="flex h-[26px] bg-[#95a09f]">
        <button type="button" aria-label="模型树" className="flex w-8 items-center justify-center bg-[#e9eeed]">
          <Ico>
            <path d="M3 1.500h3v3H3zM3 6.500h3v3H3zM3 11.500h3v3H3zM10.500 6.500h3v3h-3zM4.500 4.500v7M6 8h4.500" stroke="#2f3a39" />
          </Ico>
        </button>
        <button type="button" aria-label="层树" className="flex w-7 items-center justify-center">
          <Ico>
            <path d="M.5 1.500h9v5h-9zM3.500 5.500h9v5h-9zM6.500 9.500h9v5h-9z" fill="#fbeebf" stroke="#c9a35e" />
          </Ico>
        </button>
      </div>
      <div className="flex h-[31px] items-center pl-2.5">
        <button type="button" aria-label="显示实体" className="flex items-center gap-1">
          <Ico>
            <path d="M1 5l3-3h10v9l-3 3H1z" fill="#3f4a49" />
            <path d="M1 5h9.500v9.500H1z" fill="#58ad3d" />
          </Ico>
          <span className="h-4 border-l-2 border-dotted border-[#9aa3a2]" />
        </button>
        <div className="flex items-center pl-5">
          <button type="button" aria-label="全部展开">
            <Ico>
              <path d="M5.500 1.500h6v3h-6zM7.500 6.500h6v3h-6zM9.500 11.500h6v3h-6z" fill="#7cc3e0" stroke="#1c5876" />
              <path d="M0 2h4L2 4.500zM3 7h4L5 9.500zM5 12h4l-2 2.500z" fill="#3f4a49" />
            </Ico>
          </button>
          <button type="button" aria-label="全部折叠" className="px-2">
            <Ico>
              <path d="M6.500 1.500h3v3h-3zM6.500 6.500h3v3h-3zM6.500 11.500h3v3h-3z" fill="#8d9798" stroke="#222c2b" />
              <path d="M2 1v3.500L4.500 3zM2 6.500V10l2.500-1.500zM2 11.500V15l2.500-1.500z" fill="#3f4a49" />
            </Ico>
          </button>
          <button
            type="button"
            aria-label="树列"
            className="flex size-6 items-center justify-center border border-[#7f8988] bg-[#c3c8c7]"
          >
            <Ico>
              <path d="M1.500 1.500h12v3h-12zM1.500 4.500v10h4v-10M9.500 1.500v9M13.500 4.500V9M5.500 1.500v3M5.500 14.500H7" stroke="#858e8d" />
              <circle cx="11.500" cy="12.500" r="2" stroke="#858e8d" />
            </Ico>
          </button>
          <span className="ml-1 h-6 w-px bg-[#9aa3a2]" />
          <button type="button" className="flex w-7 justify-center text-base leading-4 text-[#2f3a39]">
            »
          </button>
        </div>
        <button type="button" aria-label="设置" className="pl-0.5">
          <Ico className="size-[18px]">
            <path d="M1.500 .5h8l4 4v10h-12z" fill="#f0f3f3" stroke="#a3abaa" />
            <circle cx="4.500" cy="7" r="1" stroke="#8d9798" />
            <circle cx="4.500" cy="11" r="1" stroke="#8d9798" />
            <path d="M7 7h4M7 11h4" stroke="#8d9798" />
            <Corner />
          </Ico>
        </button>
      </div>
      <div className="flex h-[31px] items-center pl-3">
        <Ico className="mr-1 size-4">
          <path d="M.5 1.500h15L10 8v7H7V8z" fill="#dfe4e4" stroke="#5c6667" />
        </Ico>
        <div className="flex h-7 w-[99px] items-center border border-[#8a9493] bg-[#fcfdfd] pr-1">
          <input type="text" aria-label="过滤模型树" className="h-full w-0 min-w-0 flex-1 px-1 outline-none" />
          <button type="button" aria-label="清除">
            <Ico className="size-3">
              <path d="M3 3l10 10M13 3L3 13" stroke="#8d9798" strokeWidth="1.500" />
            </Ico>
          </button>
        </div>
        <button type="button" aria-label="过滤选项" className="px-1.5">
          <Caret />
        </button>
        <button type="button" aria-label="添加过滤" className="pl-0.5">
          <Ico>
            <path d="M8 2v12M2 8h12" stroke="#8f9897" strokeWidth="3" />
          </Ico>
        </button>
      </div>

      <div className="flex h-[26px] items-center gap-1.5 pt-1 pl-[11px]">
        <Ico>
          <path d="M1.500 5l3-3h10v8l-3 4h-10z" fill="#5fb0d3" stroke="#226789" />
          <path d="M1.500 5h10v9h-10z" fill="#bfe6f6" stroke="#3c86a8" />
        </Ico>
        <span>PRT0003.PRT</span>
      </div>
      <ul>
        {TREE.map((node, i) => (
          <li key={node.label} className="flex h-[22px] items-center">
            <span className="flex h-full w-[31px] justify-end">
              <svg viewBox="0 0 16 22" className="h-[22px] w-4" fill="none" aria-hidden="true">
                <path
                  d={i === TREE.length - 1 ? "M4.500 0v11.500H13" : node.open ? "M4.500 0v22" : "M4.500 0v22M4.500 11.500H13"}
                  stroke="#a6adac"
                />
                {node.open && <path d="M2 7v9l5-4.500z" fill="#4a5352" />}
              </svg>
            </span>
            {node.icon}
            <span className="pl-[5px] whitespace-nowrap">{node.label}</span>
          </li>
        ))}
      </ul>
      <div className="flex items-center pt-0.5 pr-1 pl-[11px]">
        <span className="h-2 w-px bg-[#58ad3d]" />
        <span className="border-y-[3px] border-l-4 border-transparent border-l-[#58ad3d]" />
        <span className="h-0.5 flex-1 bg-[#6fbd62]" />
        <span className="border-y-[3px] border-r-4 border-transparent border-r-[#58ad3d]" />
        <span className="h-2 w-px bg-[#58ad3d]" />
      </div>
    </aside>
  );
}

/* ---------- status bar ---------- */

function StatusBar() {
  return (
    <div className="flex h-[35px] shrink-0 items-center border-t border-[#7d8786] bg-[#eaeeed] pt-px text-xs text-[#4a5352]">
      <div className="flex items-center pl-[5px]">
        <button
          type="button"
          aria-label="导航器"
          className="flex h-6 w-[22px] items-center justify-center border border-[#7f8988] bg-[#c3c8c7]"
        >
          <Ico>
            <path d="M.5 .5h14v14H.5z" fill="#f6f8f8" stroke="#6e7879" />
            <path d="M.5 3.500h14M5.500 3.500v11" stroke="#6e7879" />
            <path d="M6 12.500c2-3 7-3 9.500 0-2.500 3-7.500 3-9.500 0z" fill="#fff" stroke="#222c2b" />
            <circle cx="11" cy="12.500" r="1.500" fill="#222c2b" />
          </Ico>
        </button>
        <button type="button" aria-label="浏览器" className="px-[7px]">
          <Ico className="size-[18px]">
            <circle cx="8" cy="8" r="6" fill="#3f94c1" />
            <path d="M4 4c3-2 5 0 4 3s-4 1-3 4M10 4l3 3-2 4" stroke="#a9daef" strokeWidth="2" />
            <ellipse cx="8" cy="8" rx="8" ry="3.500" transform="rotate(-45 8 8)" stroke="#5c7f91" />
          </Ico>
        </button>
        <button type="button" aria-label="全屏">
          <Ico className="size-[18px]">
            <path d="M1.500 1.500h13v13h-13z" fill="#e3f1f7" stroke="#2d6684" />
          </Ico>
        </button>
        <span className="ml-3 h-6 w-px bg-[#8a9493]" />
      </div>
      <div className="ml-auto flex items-center">
        <span className="h-[27px] w-1.5 border-x border-[#8a9493]" />
        <button type="button" aria-label="查找" className="flex items-center gap-1.5 px-[5px]">
          <Ico className="size-[18px]">
            <path d="M3 2h3v3l1 2v7H1V9zM10 2h3v3l2 4v5H9V7l1-2z" fill="#3a4546" />
            <path d="M6.500 6h3v4h-3z" fill="#20292b" />
            <path d="M2.500 9v4M13 9v4" stroke="#a9b2b3" strokeWidth="1.500" />
          </Ico>
          <Caret />
        </button>
        <span className="h-[27px] w-px bg-[#8a9493]" />
        <button type="button" aria-label="框选" className="flex items-center gap-2 px-[5px]">
          <Ico>
            <path d="M.5 2.500h15v11H.5z" stroke="#2f3a39" strokeDasharray="3 2" />
          </Ico>
          <Caret />
        </button>
        <button type="button" aria-label="选择过滤" className="pl-1">
          <Ico className="size-[18px]">
            <path d="M.5 .5h15v15H.5z" fill="#bfe4f1" stroke="#1c5876" strokeDasharray="3 2" />
            <path d="M1 5c2-3 6-3 8 0-2 3-6 3-8 0z" fill="#fff" stroke="#222c2b" />
            <circle cx="5" cy="5" r="1.500" fill="#222c2b" />
            <path d="M9 6v8l2-2 1.500 3 1.500-.5-1.500-3h2.500z" fill="#fff" stroke="#222c2b" />
          </Ico>
        </button>
        <div className="relative mr-[18px] ml-[100px] flex h-[25px] w-[177px]">
          <select
            aria-label="选择过滤器"
            className="h-full w-full appearance-none border border-[#a3abaa] bg-[#f4f7f6] pl-1.5 outline-none"
          >
            <option>几何</option>
          </select>
          <span className="pointer-events-none absolute inset-y-0 right-0 flex w-4 items-center justify-center border border-[#a3abaa]">
            <Caret />
          </span>
        </div>
      </div>
    </div>
  );
}

/* ---------- task bar ---------- */

const APPS: { name: string; art: ReactNode; state?: "run" | "active" }[] = [
  {
    name: "开始",
    art: <path d="M4 6l7-1v6.500H4zM12 5l8-1v7.500h-8zM4 12.500h7V19l-7-1zM12 12.500h8V20l-8-1z" fill="#fff" />,
  },
  {
    name: "搜索",
    art: (
      <>
        <circle cx="13" cy="9" r="7.500" stroke="#fff" strokeWidth="1.800" />
        <path d="M8 15l-7 7.500" stroke="#fff" strokeWidth="2" />
      </>
    ),
  },
  {
    name: "浏览器",
    state: "run",
    art: (
      <>
        <circle cx="12" cy="12" r="11" fill="#64bb35" />
        <path d="M7 13h11c0-8-11-8-11 0 0 6 8 7 11 2" stroke="#fff" strokeWidth="2.600" />
        <path d="M3 19C5 11 12 5 21 4" stroke="#e3f4d5" strokeWidth="1.200" />
      </>
    ),
  },
  {
    name: "WPS",
    state: "run",
    art: (
      <>
        <path d="M1 5h5l3 9 2-5-2-4h4l3 9 4-9h4l-7 16h-2l-3-7-3 7H7z" fill="#c93a28" />
        <path d="M12 5h3l-6 15H7z" fill="#ef6a4f" />
      </>
    ),
  },
  {
    name: "录屏",
    state: "run",
    art: (
      <>
        <path d="M1 3h22v19H1z" fill="#ebe7e4" />
        <path d="M1 3h22v3H1z" fill="#fbfbfb" />
        <circle cx="9" cy="14" r="4.500" fill="#d56b3e" />
        <path d="M9 13.500V9a4.500 4.500 0 014.500 4.500z" fill="#f2a98a" />
        <path d="M17 9h3v10h-3z" fill="#d56b3e" />
      </>
    ),
  },
  {
    name: "文件资源管理器",
    state: "run",
    art: (
      <>
        <path d="M1 3h8l2 2h12v15H1z" fill="#e8ba42" />
        <path d="M1 7h22v13H1z" fill="#f8dc80" />
        <path d="M5 22v-8h14v8h-4v-4H9v4z" fill="#4d9cc9" />
      </>
    ),
  },
  {
    name: "QQ",
    state: "run",
    art: (
      <>
        <rect width="24" height="24" rx="4" fill="#fff" />
        <ellipse cx="12" cy="14" rx="7" ry="7.500" fill="#111" />
        <ellipse cx="12" cy="7.500" rx="5" ry="5.500" fill="#111" />
        <ellipse cx="12" cy="16.500" rx="4.500" ry="5" fill="#fff" />
        <circle cx="10.500" cy="6" r="1.300" fill="#fff" />
        <circle cx="13.500" cy="6" r="1.300" fill="#fff" />
        <path d="M9 9h6l-3 2z" fill="#f2a21b" />
        <path d="M6 11.500c4 2 8 2 12 0v2c-4 2-8 2-12 0z" fill="#e02d2d" />
        <path d="M6 22h5M13 22h5" stroke="#f2a21b" strokeWidth="2" />
      </>
    ),
  },
  {
    name: "Creo Parametric",
    state: "active",
    art: (
      <>
        <path d="M1 1h22v22H1z" fill="#e9eef0" stroke="#fff" strokeWidth="2" />
        <path d="M3 3h18v18H3z" stroke="#78858a" />
        <path d="M4 4h5v16H4z" fill="#b9d5de" />
        <path d="M9 5h11v10H9z" fill="#1b87b6" />
        <path d="M9 16h11v4H9z" fill="#dce3e5" />
      </>
    ),
  },
  {
    name: "迅雷",
    state: "run",
    art: (
      <>
        <rect width="24" height="24" rx="3" fill="#2268e8" />
        <path d="M2 7l7-1V2l12 9-7-1-1 14h-3V10z" fill="#fff" />
        <path d="M18 0c1 3 3 5 6 6V3a3 3 0 00-3-3z" fill="#57b5f5" />
      </>
    ),
  },
  {
    name: "Everything",
    state: "run",
    art: (
      <>
        <circle cx="14" cy="9" r="6.500" stroke="#f0871d" strokeWidth="4" />
        <path d="M10 14l-7 8" stroke="#f0871d" strokeWidth="5" />
      </>
    ),
  },
  {
    name: "设置",
    state: "run",
    art: (
      <>
        <circle cx="12" cy="12" r="5" stroke="#fff" strokeWidth="2.400" />
        <path
          d="M12 3v4M12 17v4M3 12h4M17 12h4M5.600 5.600l3 3M15.400 15.400l3 3M18.400 5.600l-3 3M8.600 15.400l-3 3"
          stroke="#fff"
          strokeWidth="2.400"
        />
      </>
    ),
  },
  {
    name: "录像机",
    state: "run",
    art: (
      <>
        <rect width="24" height="24" rx="2" fill="#dc1e37" />
        <rect x="4.500" y="6.500" width="15" height="11" rx="5.500" stroke="#fbd9dd" strokeWidth="3" />
      </>
    ),
  },
];

function TaskBar() {
  return (
    <footer className="flex h-10 shrink-0 bg-linear-to-r from-[#142427] via-[#2b363b] via-70% to-[#14282a] text-xs text-white">
      {APPS.map((app) => (
        <button
          key={app.name}
          type="button"
          aria-label={app.name}
          className={`flex w-[49px] flex-col items-center ${app.state === "active" ? "bg-[#4c5a5d]" : ""}`}
        >
          <span className="flex flex-1 items-center">
            <Ico className="size-6" box="0 0 24 24">
              {app.art}
            </Ico>
          </span>
          <span
            className={`h-0.5 ${app.state === "active" ? "w-full" : "w-10"} ${app.state ? "bg-[#76b0dc]" : ""}`}
          />
        </button>
      ))}
      <div className="ml-auto flex flex-col items-center justify-center pr-2 leading-[19px]">
        <time>20:09</time>
        <time>2025/5/11</time>
      </div>
    </footer>
  );
}

export default function App() {
  return (
    <div className={`flex h-screen flex-col overflow-hidden ${UI_FONT}`}>
      <TitleBar />
      <TabBar />
      <Ribbon />
      <div className="flex min-h-0 flex-1">
        <Graphics />
        <TreePanel />
      </div>
      <StatusBar />
      <TaskBar />
    </div>
  );
}
